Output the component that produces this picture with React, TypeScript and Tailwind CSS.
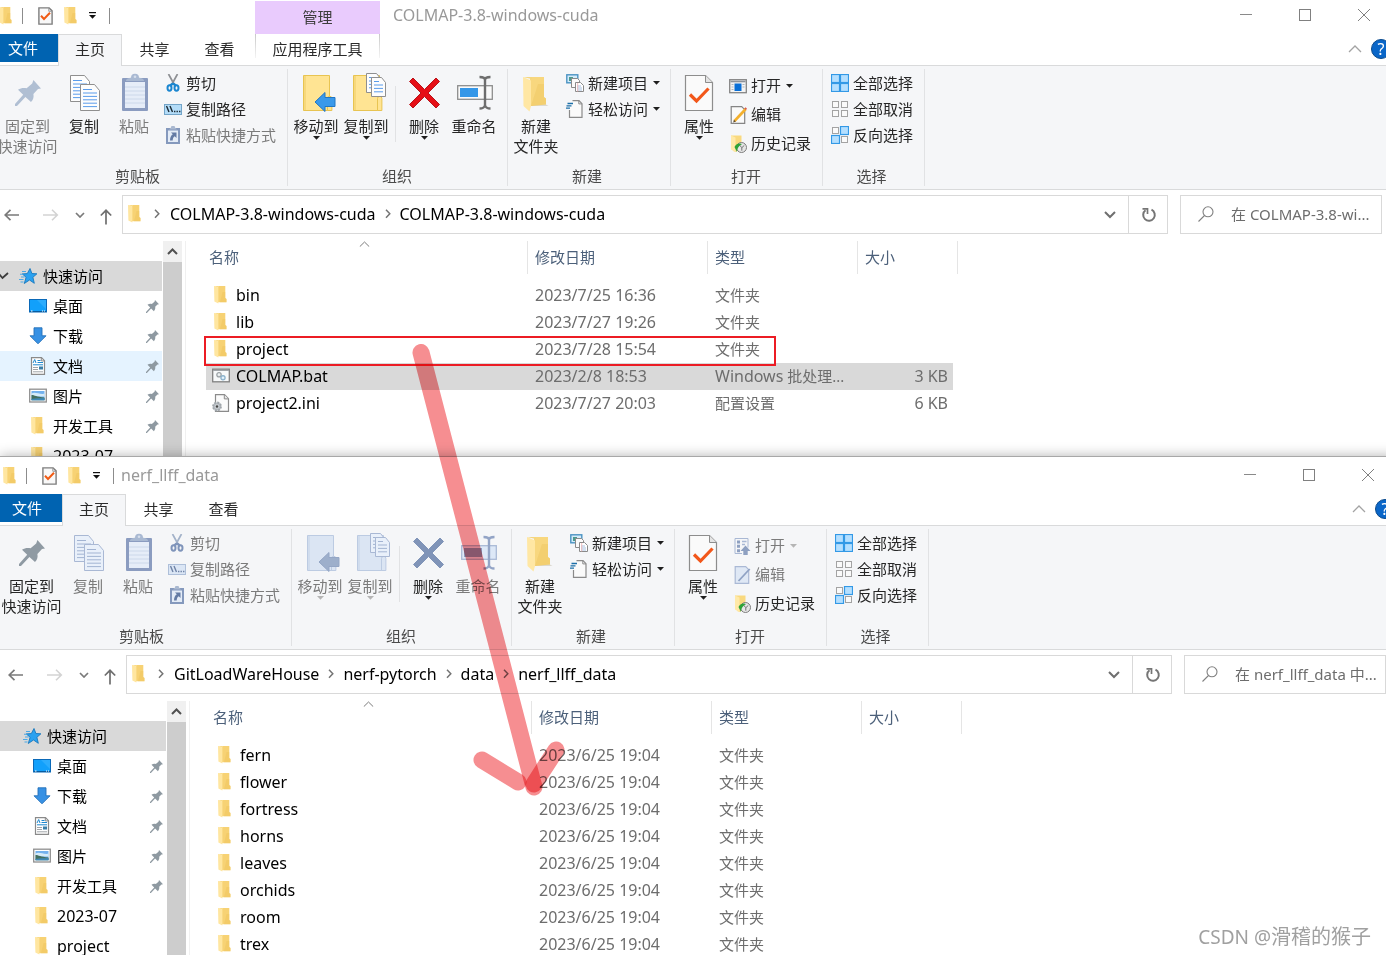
import React from "react";

type Tone = "active" | "muted";

const INK = "text-[#262626]";
const FADED = "text-[#7b7b7b]";

/* ---------- icons ---------- */

function FolderIcon({ className = "h-[18px] w-[13px]" }: { className?: string }) {
  return (
    <svg viewBox="0 0 13 18" className={`${className} shrink-0`} aria-hidden="true">
      <path d="M4 0h7.3v12l1.2 1v3.2H4z" fill="#f7d274" />
      <path d="M8.5 6h2.8v6l1.2 1v3.2H6z" fill="#eec45c" opacity=".45" />
      <path d="M0 0l4.400 1.600v16L.4 15.400z" fill="#ffe6a0" />
      <path d="M0 0h5v1.700z" fill="#fbdc88" />
    </svg>
  );
}

function CheckPageIcon() {
  return (
    <svg viewBox="0 0 15 18" className="h-[18px] w-[15px] shrink-0" aria-hidden="true">
      <path d="M.9.9h10.200l3 3v13.200H.9z" fill="#f8f8f8" stroke="#7d7d7d" strokeWidth="1.400" />
      <path d="M10.800.9v3.400h3.400" fill="none" stroke="#9a9a9a" />
      <path d="M3 8.800l3 3.200 6-6.200" fill="none" stroke="#f05a14" strokeWidth="2" />
    </svg>
  );
}

function PushPin({ fill, className }: { fill: string; className: string }) {
  return (
    <svg viewBox="0 0 26 26" className={`${className} shrink-0`} aria-hidden="true">
      <path
        d="M18 0l8 8.400-3 .5-4.600 4.800c.6 3.600 0 5.800-2.600 8.600l-5.600-5.200L1.800 26 0 26l0-1.800 8.400-9L3 9.600c2.800-1.900 5.400-2.300 8.600-1.600L17 3.400z"
        fill={fill}
      />
    </svg>
  );
}

function Big({ children }: { children: React.ReactNode }) {
  return (
    <svg viewBox="0 0 36 38" className="h-[38px] w-9 shrink-0 overflow-visible" aria-hidden="true">
      {children}
    </svg>
  );
}

function BigPin({ tone }: { tone: Tone }) {
  return (
    <Big>
      <g transform="translate(5 6)">
        <path
          d="M18.400 0l7.600 8.400-3 .5-4.600 5c.6 3.400 0 5.400-2.400 8l-5.600-5L2 26 0 26l0-2 8.200-9.200L3 9.800c2.800-1.900 5.400-2.300 8.600-1.600L17.200 3.400z"
          fill={tone === "active" ? "#8f9aa3" : "#b0bfd3"}
        />
      </g>
    </Big>
  );
}

function TextPage({ x, y, w, h, tone }: { x: number; y: number; w: number; h: number; tone: Tone }) {
  const edge = tone === "active" ? "#8f8f8f" : "#a9b8d4";
  const line = tone === "active" ? "#5a9ceb" : "#a3b4d2";
  const paper = tone === "active" ? "#fdfdfd" : "#e9f0fa";
  const fold = Math.round(w * 0.3);
  const rows = Math.floor((h - fold - 4) / 3.4);
  return (
    <g transform={`translate(${x} ${y})`}>
      <path d={`M.5.5h${w - fold}l${fold - 1} ${fold}v${h - fold - 1}H.5z`} fill={paper} stroke={edge} />
      <path d={`M${w - fold}.5v${fold}h${fold - 1}`} fill="#dfe5ec" stroke={edge} strokeWidth=".9" />
      <path d={`M3 ${fold - 0.5}h${w - fold - 5}`} stroke={line} />
      {Array.from({ length: rows }, (_, i) => (
        <path key={i} d={`M3 ${fold + 3 + i * 3.4}h${w - 6}`} stroke={line} />
      ))}
    </g>
  );
}

function BigCopy({ tone }: { tone: Tone }) {
  return (
    <Big>
      <TextPage x={4} y={1} w={20} h={27} tone={tone} />
      <TextPage x={14} y={10} w={20} h={27} tone={tone} />
    </Big>
  );
}

function BigPaste() {
  return (
    <Big>
      <rect x="6" y="4" width="26" height="33" rx="1" fill="#8b9cc0" />
      <rect x="9" y="8" width="20" height="26" fill="#e6edf8" />
      <path d="M9 13h20M9 17h20M9 21h20M9 25h20M9 29h20" stroke="#ccd8ea" />
      <path d="M10 7c0-2.500 3-3 5-3.200a4 4 0 0 1 8 0c2 .2 5 .7 5 3.200z" fill="#a9b9d2" />
      <circle cx="19" cy="2.800" r="1.300" fill="#d5deeb" />
    </Big>
  );
}

function BigFolderBase({ tone }: { tone: Tone }) {
  const fill = tone === "active" ? "#ffe493" : "#dbe5f3";
  const edge = tone === "active" ? "#e8c452" : "#bccbe2";
  return (
    <>
      <path d="M5.500 1.500h26v35h-26z" fill={fill} stroke={edge} />
      <path d="M5.500 1.500h2.500v35h-2.500z" fill={edge} opacity=".35" />
      <path d="M29.500 36.500v-12a2.200 2.200 0 0 1 4.400 0v12z" fill={fill} stroke={edge} />
    </>
  );
}

function BigMove({ tone }: { tone: Tone }) {
  return (
    <Big>
      <BigFolderBase tone={tone} />
      <path
        d="M17 28l10-9.500v5h10v9H27v5z"
        fill={tone === "active" ? "#3a99ea" : "#9dafcb"}
        stroke={tone === "active" ? "#2176c4" : "#94a6c5"}
      />
    </Big>
  );
}

function BigCopyTo({ tone }: { tone: Tone }) {
  return (
    <Big>
      <BigFolderBase tone={tone} />
      <TextPage x={18} y={-1} w={15} h={20} tone={tone} />
      <TextPage x={23} y={3} w={15} h={20} tone={tone} />
    </Big>
  );
}

function BigDelete({ tone }: { tone: Tone }) {
  const fill = tone === "active" ? "#e60f16" : "#8094b8";
  const edge = tone === "active" ? "#b8141a" : "#8094b8";
  return (
    <Big>
      <path
        d="M3.500 7.500l3.500-3.500 11.500 11.500L30 4l3.500 3.500L22 19l11.500 11.500L30 34 18.500 22.500 7 34l-3.500-3.500L15 19z"
        fill={fill}
        stroke={edge}
      />
    </Big>
  );
}

function BigRename({ tone }: { tone: Tone }) {
  const on = tone === "active";
  return (
    <Big>
      <g transform="translate(1 0)">
        <rect x=".7" y="11.700" width="34.600" height="13.600" fill={on ? "#fafafa" : "#dde8f7"} stroke={on ? "#8d8d8d" : "#a9b9d6"} strokeWidth="1.300" />
        <rect x="3" y="14" width="18" height="9" fill={on ? "#3597e8" : "#8c9cc0"} />
        <path
          d="M22.500 3c3 0 5.500 1 5.500 3v25c0 2-2.500 3.500-5.500 3.500M33.500 3c-3 0-5.500 1-5.500 3v25c0 2 2.500 3.500 5.500 3.500"
          fill="none"
          stroke={on ? "#6e6e6e" : "#93a4c6"}
          strokeWidth="2.400"
        />
      </g>
    </Big>
  );
}

function BigNewFolder() {
  return (
    <Big>
      <g transform="translate(-1 0)">
        <path d="M13 3h14v20l2 1.500V32H13z" fill="#f8d77e" />
        <path d="M21 10h6v13l2 1.500V32H14z" fill="#ecc45c" opacity=".4" />
        <path d="M6 3h9l-.3 2z" fill="#f5d67e" />
        <path d="M6 3l8 3.500V32l-1.500 5.500L6.500 32z" fill="#ffe7a4" />
        <path d="M29 30.500l2.500 1.500H15z" fill="#dcd9d0" />
      </g>
    </Big>
  );
}

function BigProperties() {
  return (
    <Big>
      <path d="M4.500 1.500h20l7 7v28h-27z" fill="#fafafa" stroke="#8d8d8d" strokeWidth="1.200" />
      <path d="M24.500 1.500v7h7" fill="#e4e4e4" stroke="#8d8d8d" />
      <path d="M9 20.500l6.500 6.500L27.500 14.500" fill="none" stroke="#f2571a" strokeWidth="3.200" />
    </Big>
  );
}

function Small({ children }: { children: React.ReactNode }) {
  return (
    <svg viewBox="0 0 18 18" className="h-[18px] w-[18px] shrink-0" aria-hidden="true">
      {children}
    </svg>
  );
}

function CutIcon({ tone }: { tone: Tone }) {
  const blade = tone === "active" ? "#8e9094" : "#a3b2c9";
  const ring = tone === "active" ? "#1b86d0" : "#7f94ba";
  return (
    <Small>
      <path d="M4.500 0L10.500 11M13.500 0L7.500 11" stroke={blade} strokeWidth="1.700" />
      <path d="M9 9.500l-3 2M9 9.500l3 2" stroke={ring} strokeWidth="2.200" />
      <ellipse cx="5.500" cy="14" rx="2" ry="2.700" fill="none" stroke={ring} strokeWidth="2" />
      <ellipse cx="12.500" cy="14" rx="2" ry="2.700" fill="none" stroke={ring} strokeWidth="2" />
    </Small>
  );
}

function PathIcon({ tone }: { tone: Tone }) {
  const on = tone === "active";
  return (
    <Small>
      <rect x=".5" y="4.500" width="17" height="10" fill={on ? "#b3dcf8" : "#dbe6f5"} stroke={on ? "#73a4c8" : "#aebfd9"} />
      <path d="M2.500 6l2.500 6M6 6l2.500 6" stroke={on ? "#1c2a35" : "#6f83a6"} strokeWidth="1.400" />
      <path d="M10 11.500h1.400M12.500 11.500h1.400M15 11.500h1.400" stroke={on ? "#1c2a35" : "#6f83a6"} strokeWidth="1.400" />
    </Small>
  );
}

function PasteShortcutIcon() {
  return (
    <Small>
      <rect x="2" y="2" width="14" height="16" fill="#8599bd" />
      <rect x="4" y="4.500" width="10" height="11.500" fill="#e4ecf7" />
      <path d="M5 3.500h8L11 1.500a2 2 0 0 0-4 0z" fill="#a9b8d0" />
      <path d="M7 6.500h5.500V12l-1.800-1.800C9.300 11 8.700 12.500 8.700 14.500H6c0-3 1-5 2.800-6.200z" fill="#647ba4" />
    </Small>
  );
}

function NewItemIcon() {
  return (
    <Small>
      <rect x=".8" y=".8" width="11" height="8" fill="#d4ebfa" stroke="#4b93c3" strokeWidth="1.400" />
      <rect x="3" y="3" width="4" height="4" fill="#4b9a8e" />
      <path d="M5.500 4.500h6l2 2v7h-8z" fill="#fafafa" stroke="#8a8a8a" />
      <path d="M9.500 8.500h5l3 3v6h-8z" fill="#fff" stroke="#8a8a8a" />
      <path d="M11 12h4M11 14h5M11 16h5" stroke="#9bb9dd" strokeWidth=".9" />
      <path d="M11.700 9v8.500" stroke="#efb0b0" strokeWidth=".8" />
    </Small>
  );
}

function EasyAccessIcon() {
  return (
    <Small>
      <path d="M3.500 .700h9.500l3 3v13.600H3.500z" fill="#fafafa" />
      <path d="M6.500.7H13l3 3v13.600H3.500V10" fill="none" stroke="#8a8a8a" strokeWidth="1.200" />
      <path d="M12.800.7v3.200H16" fill="none" stroke="#8a8a8a" />
      <path d="M1.500 3.500h5.500M.5 5.800h5M0 8.200h4" stroke="#1d6fa8" strokeWidth="1.300" />
    </Small>
  );
}

function OpenIcon({ tone }: { tone: Tone }) {
  if (tone === "active") {
    return (
      <Small>
        <rect x=".7" y="2.700" width="16.600" height="13" fill="#f4f4f4" stroke="#858585" strokeWidth="1.300" />
        <path d="M1.500 4.500h15" stroke="#8d9299" strokeWidth="1.600" />
        <rect x="5.500" y="6.500" width="7" height="7.500" fill="#0a6fd6" />
        <path d="M2.500 7.500h2M2.500 10h2M2.500 12.500h2M13.500 7.500h2M13.500 10h2" stroke="#b0b5bb" />
      </Small>
    );
  }
  return (
    <Small>
      <path d="M2 1.500h13v9M2 1.500v15h7" fill="none" stroke="#a9b8d4" />
      <path d="M4 3.500h3v3H4zM4 7.800h3v3H4zM4 12.300h3v3H4z" fill="#8ea0c1" />
      <path d="M9 4.500h4.500M9 7.500h3" stroke="#a9b8d4" strokeWidth="1.300" />
      <path d="M12.500 8.500l5 5.500h-2.800v4h-4.400v-4H7.500z" fill="#8ea0c1" />
    </Small>
  );
}

function EditIcon({ tone }: { tone: Tone }) {
  const on = tone === "active";
  return (
    <Small>
      <path d="M2.200.7h10.500l3 3v13.600H2.200z" fill={on ? "#fafafa" : "#dfe8f5"} stroke={on ? "#858585" : "#aab9d5"} strokeWidth="1.200" />
      <path d="M5.500 15L16.700 3" stroke={on ? "#f3b02e" : "#8fa2c4"} strokeWidth={on ? 2.600 : 1.800} />
      {on && <path d="M4.200 16.500l.7-2.800 2 1.800z" fill="#5d4a2a" />}
      {on && <path d="M15.300 2.600l1.300-1.300 1.400 1.400-1.200 1.400z" fill="#d8594d" />}
    </Small>
  );
}

function HistoryIcon() {
  return (
    <Small>
      <path d="M2 .5h10.500v12l-5.500 4.500-3-1z" fill="#f9d97f" />
      <path d="M2 .5l4.500 2v14.500L2 14.500z" fill="#ffe9a8" />
      <circle cx="12.500" cy="12.500" r="5" fill="#e6e6e6" stroke="#7c7c7c" />
      <path d="M10.500 10l2.300 2.700 2.500-2.300M12.800 12.700v3" stroke="#666" fill="none" strokeWidth=".9" />
      <path d="M5.500 12l2.500 5c0-3 1.600-6.500 5.200-8-3.500-1.500-6.800.3-7.700 3z" fill="#2ea338" />
    </Small>
  );
}

function SelectGrid({ on }: { on: [boolean, boolean, boolean, boolean] }) {
  const spots: [number, number][] = [
    [0.5, 0.5],
    [9.5, 0.5],
    [0.5, 9.5],
    [9.5, 9.5],
  ];
  return (
    <Small>
      {spots.map(([x, y], i) =>
        on[i] ? (
          <rect key={i} x={x} y={y} width="8" height="8" fill="#b4dfff" stroke="#3399e6" strokeWidth="1.200" />
        ) : (
          <rect key={i} x={x + 1} y={y + 1} width="6" height="6" fill="#fafafa" stroke="#a3a3a3" />
        ),
      )}
    </Small>
  );
}

function StarIcon() {
  return (
    <svg viewBox="0 0 18 18" className="h-[18px] w-[18px] shrink-0" aria-hidden="true">
      <path d="M11 1.500l1.900 5 5 .3-4 3.500 1.400 6L10.500 13l-5.200 3.500 1.800-6.200L3.300 6.900l5-.3z" fill="#2aa1f0" stroke="#1878bd" strokeWidth=".9" />
      <path d="M3 4.500h4M1 7.200h3.500M2 10h3.500M0 12.500h4.500M1.500 15h3" stroke="#4ba9e6" strokeWidth="1.100" />
    </svg>
  );
}

function DesktopIcon() {
  return (
    <Small>
      <rect x=".5" y="2.500" width="17" height="12.500" fill="#12a0fb" stroke="#0a69b8" />
      <path d="M8 3h9v9z" fill="#4dbbff" opacity=".45" />
      <path d="M1 14.500h16" stroke="#0a5c9e" />
      <path d="M2 14h1.500M13 14h1M15 14h1" stroke="#fff" />
    </Small>
  );
}

function DownloadIcon() {
  return (
    <Small>
      <path d="M5 .8h8v8h4L9 16.800 1 8.800h4z" fill="#3791e4" stroke="#2571b9" strokeWidth=".9" />
    </Small>
  );
}

function DocumentIcon() {
  return (
    <Small>
      <path d="M2.500.7h10l3 3v13.600h-13z" fill="#fff" stroke="#8a8a8a" strokeWidth="1.200" />
      <path d="M12.300.7v3.200h3.200" fill="none" stroke="#8a8a8a" />
      <path d="M4 6l1.700-3.500L7 6M8.500 3.500h3M8.500 5.500H14M4 7.800h10" stroke="#1f88cf" fill="none" />
      <path d="M4 10.500h5M4 12.500h5M4 14.800h10" stroke="#a0a4a8" />
      <rect x="10" y="9.500" width="4" height="3" fill="#3b7ea8" />
    </Small>
  );
}

function PictureIcon() {
  return (
    <Small>
      <rect x=".7" y="2.200" width="16.600" height="12.800" fill="#fff" stroke="#909090" strokeWidth="1.300" />
      <rect x="2.500" y="4" width="13" height="9.200" fill="#73b1ee" />
      <path d="M2.500 6.500c4-2 7 1 13 .3v2.700h-13z" fill="#d5ebf9" />
      <path d="M2.500 8c3 0 5 2 13 2.400v2.800h-13z" fill="#44705f" />
      <path d="M2.500 12c4-1 9-.6 13-1v2.200h-13z" fill="#3f88b6" />
    </Small>
  );
}

function BatIcon() {
  return (
    <Small>
      <rect x=".7" y="2.200" width="16.600" height="12.600" fill="#f7f9fa" stroke="#818181" strokeWidth="1.300" />
      <path d="M1 3.500h16" stroke="#a0a4a8" />
      <circle cx="7" cy="7.700" r="2.200" fill="#dfe5e8" stroke="#9aa0a4" strokeWidth="1.200" />
      <circle cx="7" cy="7.700" r=".7" fill="#fff" />
      <circle cx="11" cy="10.800" r="2.100" fill="#cce5f5" stroke="#8ab0ca" strokeWidth="1.200" />
      <circle cx="11" cy="10.800" r=".7" fill="#fff" />
    </Small>
  );
}

function IniIcon() {
  return (
    <Small>
      <path d="M3.500.7h9l4 4v12.600h-13z" fill="#fbfbfb" stroke="#8b8b8b" strokeWidth="1.200" />
      <path d="M12.300.7v4.200h4.200" fill="#e7e7e7" stroke="#8b8b8b" />
      <circle cx="5" cy="12.500" r="4" fill="#b6bbc0" stroke="#a0a6ab" strokeWidth="1.800" strokeDasharray="2 1.100" />
      <circle cx="5" cy="12.500" r="2.300" fill="#c9ced2" />
      <circle cx="5" cy="12.500" r="1.200" fill="#444" />
    </Small>
  );
}

function Caret({ tone = "active", className = "" }: { tone?: Tone; className?: string }) {
  return (
    <svg viewBox="0 0 7 4" className={`h-1 w-[7px] shrink-0 ${className}`} aria-hidden="true">
      <path d="M0 0h7L3.500 3.800z" fill={tone === "active" ? "#1e1e1e" : "#b5b5b5"} />
    </svg>
  );
}

function Chevron({ d, box, className, stroke = "#6b6b6b", width = 1.6 }: { d: string; box: string; className: string; stroke?: string; width?: number }) {
  return (
    <svg viewBox={box} className={`${className} shrink-0`} aria-hidden="true">
      <path d={d} fill="none" stroke={stroke} strokeWidth={width} />
    </svg>
  );
}

/* ---------- ribbon ---------- */

function BigButton({
  icon,
  lines,
  tone = "active",
  caret = false,
  width = "w-[50px]",
}: {
  icon: React.ReactNode;
  lines: string[];
  tone?: Tone;
  caret?: boolean;
  width?: string;
}) {
  return (
    <button type="button" className={`flex ${width} shrink-0 flex-col items-center pt-1 ${tone === "active" ? INK : FADED}`}>
      {icon}
      <span className="mt-1 flex flex-col items-center leading-5 whitespace-nowrap">
        {lines.map((line) => (
          <span key={line}>{line}</span>
        ))}
      </span>
      {caret && <Caret tone={tone} />}
    </button>
  );
}

function SmallButton({
  icon,
  label,
  tone = "active",
  caret = false,
  height = "h-[26px]",
}: {
  icon: React.ReactNode;
  label: string;
  tone?: Tone;
  caret?: boolean;
  height?: string;
}) {
  return (
    <button type="button" className={`flex ${height} items-center gap-1 whitespace-nowrap ${tone === "active" ? INK : FADED}`}>
      {icon}
      <span>{label}</span>
      {caret && <Caret tone={tone} className="ml-px" />}
    </button>
  );
}

function Group({ label, className, children }: { label: string; className: string; children: React.ReactNode }) {
  return (
    <>
      <div className={`flex shrink-0 flex-col pt-1 pb-[3px] ${className}`}>
        <div className="flex h-24 items-start">{children}</div>
        <div className="pr-1 text-center leading-5 text-[#4a4a4a]">{label}</div>
      </div>
      <div className="my-[3px] w-px shrink-0 bg-[#e1e2e4]" />
    </>
  );
}

/* The clipboard and organise commands depend on whether a file is selected. */
function Ribbon({ selection }: { selection: boolean }) {
  const file: Tone = selection ? "active" : "muted";
  const pin: Tone = selection ? "muted" : "active";
  return (
    <div className="flex overflow-hidden border-b border-[#d9dadb] bg-[#f5f6f8] text-[15px]">
      <Group label="剪贴板" className="w-[291px] pr-1">
        <BigButton icon={<BigPin tone={pin} />} lines={["固定到", "快速访问"]} tone={pin} width="w-[63px]" />
        <BigButton icon={<BigCopy tone={file} />} lines={["复制"]} tone={file} />
        <BigButton icon={<BigPaste />} lines={["粘贴"]} tone="muted" />
        <div className="ml-[5px] flex flex-col">
          <SmallButton icon={<CutIcon tone={file} />} label="剪切" tone={file} />
          <SmallButton icon={<PathIcon tone={file} />} label="复制路径" tone={file} />
          <SmallButton icon={<PasteShortcutIcon />} label="粘贴快捷方式" tone="muted" />
        </div>
      </Group>
      <Group label="组织" className="w-[219px] pl-[3px]">
        <BigButton icon={<BigMove tone={file} />} lines={["移动到"]} tone={file} caret />
        <BigButton icon={<BigCopyTo tone={file} />} lines={["复制到"]} tone={file} caret />
        <div className="mt-4 mr-[3px] ml-1 h-14 w-px bg-[#e1e2e4]" />
        <BigButton icon={<BigDelete tone={file} />} lines={["删除"]} caret />
        <BigButton icon={<BigRename tone={file} />} lines={["重命名"]} tone={file} />
      </Group>
      <Group label="新建" className="w-[162px]">
        <BigButton icon={<BigNewFolder />} lines={["新建", "文件夹"]} width="w-14" />
        <div className="ml-0.5 flex flex-col">
          <SmallButton icon={<NewItemIcon />} label="新建项目" caret />
          <SmallButton icon={<EasyAccessIcon />} label="轻松访问" caret />
        </div>
      </Group>
      <Group label="打开" className="w-[151px] pl-[3px]">
        <BigButton icon={<BigProperties />} lines={["属性"]} caret />
        <div className="ml-[5px] flex flex-col pt-px">
          <SmallButton icon={<OpenIcon tone={file} />} label="打开" tone={file} caret height="h-[29px]" />
          <SmallButton icon={<EditIcon tone={file} />} label="编辑" tone={file} height="h-[29px]" />
          <SmallButton icon={<HistoryIcon />} label="历史记录" height="h-[29px]" />
        </div>
      </Group>
      <Group label="选择" className="w-[101px]">
        <div className="flex flex-col pl-2">
          <SmallButton icon={<SelectGrid on={[true, true, true, true]} />} label="全部选择" />
          <SmallButton icon={<SelectGrid on={[false, false, false, false]} />} label="全部取消" />
          <SmallButton icon={<SelectGrid on={[false, true, true, false]} />} label="反向选择" />
        </div>
      </Group>
    </div>
  );
}

/* ---------- window frame ---------- */

function TitleBar({ title, context }: { title: string; context?: string }) {
  return (
    <header className="flex h-[37px] items-stretch">
      <div className="flex items-center pl-[3px]">
        <FolderIcon />
        <span className="ml-2.5 h-4 w-px bg-[#8c8c8c]" />
        <button type="button" aria-label="属性" className="ml-[15px]">
          <CheckPageIcon />
        </button>
        <button type="button" aria-label="新建文件夹" className="ml-[11px]">
          <FolderIcon />
        </button>
        <button type="button" aria-label="自定义快速访问工具栏" className="ml-3">
          <svg viewBox="0 0 7 7" className="h-[7px] w-[7px]" aria-hidden="true">
            <path d="M0 .6h7" stroke="#111" strokeWidth="1.200" />
            <path d="M0 3h7L3.500 6.800z" fill="#111" />
          </svg>
        </button>
        <span className="ml-[13px] h-4 w-px bg-[#8c8c8c]" />
      </div>
      {context && (
        <div className="mt-1 ml-[145px] flex w-[125px] items-center justify-center bg-[#e9cbfd] text-[15px] text-[#3d3d3d]">
          {context}
        </div>
      )}
      <h1 className={`flex flex-1 items-center pb-0.5 text-[16px] text-[#999999] ${context ? "ml-[13px]" : "ml-[7px]"}`}>{title}</h1>
      <div className="flex items-center gap-[47px] pr-6 pb-0.5">
        <button type="button" aria-label="最小化">
          <svg viewBox="0 0 12 12" className="h-3 w-3" aria-hidden="true">
            <path d="M0 5.500h12" stroke="#8a8a8a" />
          </svg>
        </button>
        <button type="button" aria-label="最大化">
          <svg viewBox="0 0 12 12" className="h-3 w-3" aria-hidden="true">
            <rect x=".5" y=".5" width="11" height="11" fill="none" stroke="#808080" />
          </svg>
        </button>
        <button type="button" aria-label="关闭">
          <svg viewBox="0 0 12 12" className="h-3 w-3" aria-hidden="true">
            <path d="M0 0l12 12M12 0L0 12" stroke="#808080" />
          </svg>
        </button>
      </div>
    </header>
  );
}

function Tabs({ context }: { context?: string }) {
  return (
    <nav className="flex h-8 items-stretch border-b border-[#d9dadb] text-[15px] text-[#2b2b2b]">
      <button type="button" className="mb-[3px] w-[62px] bg-[#0063b1] pr-2 text-white">
        文件
      </button>
      <button type="button" className="-mb-px w-16 border border-b-0 border-[#d9dadb] bg-[#f5f6f8] pb-0.5">
        主页
      </button>
      <button type="button" className="w-[65px]">
        共享
      </button>
      <button type="button" className="w-[65px]">
        查看
      </button>
      {context && (
        <div className="relative ml-[3px] flex w-[125px]">
          <span className="h-6 w-px bg-gradient-to-b from-[#c8c8c8] to-[#f4f4f4]" />
          <button type="button" className="flex-1">
            {context}
          </button>
          <span className="h-6 w-px bg-gradient-to-b from-[#c8c8c8] to-[#f4f4f4]" />
        </div>
      )}
      <div className="flex flex-1 items-center justify-end gap-[9px] pr-[3px] pb-px">
        <button type="button" aria-label="最小化功能区">
          <Chevron d="M1 7l6-6 6 6" box="0 0 14 8" className="h-2 w-3.5" stroke="#a3a3a3" width={1.3} />
        </button>
        <button
          type="button"
          aria-label="帮助"
          className="flex h-5 w-5 items-center justify-center rounded-full border border-[#0b4a8c] bg-[#0a66c8] text-[16px] leading-none text-white"
        >
          ?
        </button>
      </div>
    </nav>
  );
}

function AddressBar({ crumbs, search }: { crumbs: string[]; search: string }) {
  return (
    <div className="flex items-stretch pt-[5px] pr-3 pb-[7px]">
      <div className="flex w-[126px] shrink-0 items-center pl-2">
        <button type="button" aria-label="后退">
          <Chevron d="M15 6H1M6.500.8L1.200 6l5.300 5.200" box="0 0 16 12" className="h-3 w-4" stroke="#7a7a7a" width={1.7} />
        </button>
        <button type="button" aria-label="前进" className="ml-[23px]">
          <Chevron d="M0 6h14M9 .8L14.300 6 9 11.200" box="0 0 16 12" className="h-3 w-4" stroke="#d3d3d3" width={1.6} />
        </button>
        <button type="button" aria-label="最近浏览的位置" className="ml-4">
          <Chevron d="M1 1l4 4 4-4" box="0 0 10 6" className="h-1.5 w-2.5" stroke="#7a7a7a" width={1.7} />
        </button>
        <button type="button" aria-label="上移" className="mt-1 ml-[15px]">
          <Chevron d="M6 15.500V1.500M.8 6.500L6 1.300l5.200 5.200" box="0 0 12 16" className="h-4 w-3" stroke="#6f6f6f" width={1.7} />
        </button>
      </div>
      <div className="flex h-[39px] min-w-0 flex-1 items-center border border-[#d9d9d9] pl-[5px] text-[16px] text-black">
        <span className="pb-0.5">
          <FolderIcon />
        </span>
        {crumbs.map((crumb, i) => (
          <React.Fragment key={crumb + i}>
            <Chevron d="M1 .8l3.800 4L1 8.800" box="0 0 6 10" className={i === 0 ? "mr-2.5 mb-0.5 ml-[13px] h-2.5 w-1.5" : "mx-[9px] mb-0.5 h-2.5 w-1.5"} stroke="#747474" width={1.5} />
            <a href="#" className="pb-0.5 whitespace-nowrap">
              {crumb}
            </a>
          </React.Fragment>
        ))}
        <button type="button" aria-label="以前的位置" className="mr-3 ml-auto">
          <Chevron d="M1 1l5 5 5-5" box="0 0 12 8" className="h-2 w-3" stroke="#6f6f6f" width={2} />
        </button>
        <button type="button" aria-label="刷新" className="flex w-[39px] items-center justify-center self-stretch border-l border-[#d9d9d9] pl-px">
          <svg viewBox="0 0 16 16" className="h-4 w-4" aria-hidden="true">
            <path d="M10.500 2.700a5.800 5.800 0 1 1-6 .6" fill="none" stroke="#757575" strokeWidth="2" />
            <path d="M1.500 1.900h5v5" fill="none" stroke="#757575" strokeWidth="1.700" />
          </svg>
        </button>
      </div>
      <label className="ml-3 flex w-[202px] shrink-0 items-center border border-[#d9d9d9] pr-1 pb-px pl-[17px]">
        <svg viewBox="0 0 16 16" className="h-4 w-4 shrink-0" aria-hidden="true">
          <circle cx="10" cy="5.800" r="5" fill="none" stroke="#808080" strokeWidth="1.100" />
          <path d="M6.500 9.500L.5 15.500" stroke="#808080" strokeWidth="1.100" />
        </svg>
        <input
          type="text"
          aria-label="搜索"
          placeholder={search}
          className="ml-[17px] w-full min-w-0 bg-transparent text-[15px] outline-none placeholder:text-[#6d6d6d]"
        />
      </label>
    </div>
  );
}

type Place = { name: string; icon: React.ReactNode; pinned?: boolean; lit?: boolean; latin?: boolean };

function Sidebar({ places, expander }: { places: Place[]; expander: boolean }) {
  return (
    <aside className="flex shrink-0">
      <ul className="w-[166px] pt-5 text-[15px] text-black">
        <li className="flex h-[30px] items-center bg-[#d9d9d9]">
          <span className="flex w-[23px] pl-[3px]">
            {expander && <Chevron d="M0 2l3.500 4L9 1" box="0 0 10 8" className="h-2 w-2.5" stroke="#3c3c3c" width={1.8} />}
          </span>
          <StarIcon />
          <a href="#" className="ml-1.5">
            快速访问
          </a>
        </li>
        {places.map((p) => (
          <li key={p.name} className={`flex h-[30px] items-center pr-[3px] pl-[33px] ${p.lit ? "bg-[#e5f3ff]" : ""}`}>
            <span className="flex w-[18px] justify-center">{p.icon}</span>
            <a href="#" className={`ml-1.5 ${p.latin ? "text-[16px]" : ""}`}>
              {p.name}
            </a>
            {p.pinned && (
              <span className="ml-auto">
                <PushPin fill="#8e99a1" className="h-[13px] w-[13px]" />
              </span>
            )}
          </li>
        ))}
      </ul>
      <div className="ml-px flex w-[19px] flex-col bg-[#cdcdcd]">
        <button type="button" aria-label="向上滚动" className="flex h-[21px] items-center justify-center bg-[#f0f0f0]">
          <Chevron d="M1 6l4.500-4.500L10 6" box="0 0 11 7" className="h-[7px] w-[11px]" stroke="#505050" width={2} />
        </button>
      </div>
      <div className="ml-[3px] w-px bg-[#f0f0f0]" />
    </aside>
  );
}

type Entry = { name: string; date: string; type: React.ReactNode; size?: string; icon?: React.ReactNode; selected?: boolean; boxed?: boolean };

function FileTable({ entries }: { entries: Entry[] }) {
  const head = "mb-2 flex h-[33px] items-center border-r border-[#e5e5e5]";
  return (
    <div className="min-w-0 flex-1 pl-5">
      <table className="w-[752px] table-fixed border-collapse text-left text-[15px]">
        <colgroup>
          <col className="w-[322px]" />
          <col className="w-[180px]" />
          <col className="w-[150px]" />
          <col className="w-[95px]" />
          <col className="w-[5px]" />
        </colgroup>
        <thead className="text-[#4c607a]">
          <tr>
            <th className="p-0 font-normal">
              <div className={`${head} relative pl-[3px]`}>
                名称
                <span className="absolute inset-x-0 top-0 flex justify-center pr-1">
                  <Chevron d="M.8 5.600L5.500 1l4.700 4.600" box="0 0 11 6" className="h-1.5 w-[11px]" stroke="#7b7b7b" width={1} />
                </span>
              </div>
            </th>
            <th className="p-0 font-normal">
              <div className={`${head} pl-[7px]`}>修改日期</div>
            </th>
            <th className="p-0 font-normal">
              <div className={`${head} pl-[7px]`}>类型</div>
            </th>
            <th colSpan={2} className="p-0 font-normal">
              <div className={`${head} pl-[7px]`}>大小</div>
            </th>
          </tr>
        </thead>
        <tbody className="text-[#6d6d6d]">
          {entries.map((e) => {
            const bg = e.selected ? "bg-[#d9d9d9]" : "";
            return (
              <tr key={e.name} className="h-[27px]">
                <td className={`relative p-0 ${bg}`}>
                  <div className="flex items-center pl-1.5 text-[16px] leading-[27px] text-black">
                    <span className="mr-1.5 flex w-[18px] justify-center pb-0.5">{e.icon ?? <FolderIcon className="mr-0.5 h-[18px] w-[13px]" />}</span>
                    {e.name}
                  </div>
                  {e.boxed && <span className="pointer-events-none absolute top-0 -left-0.5 z-10 h-[30px] w-[572px] border-2 border-[#ec1c24]" />}
                </td>
                <td className={`p-0 pl-[7px] text-[16px] leading-[27px] ${bg}`}>{e.date}</td>
                <td className={`p-0 pl-[7px] leading-[27px] whitespace-nowrap ${bg}`}>{e.type}</td>
                <td className={`p-0 pr-[5px] text-right text-[16px] leading-[27px] ${bg}`}>{e.size}</td>
                <td className="p-0" />
              </tr>
            );
          })}
        </tbody>
      </table>
    </div>
  );
}

/* ---------- page ---------- */

const commonPlaces: Place[] = [
  { name: "桌面", icon: <DesktopIcon />, pinned: true },
  { name: "下载", icon: <DownloadIcon />, pinned: true },
  { name: "文档", icon: <DocumentIcon />, pinned: true },
  { name: "图片", icon: <PictureIcon />, pinned: true },
  { name: "开发工具", icon: <FolderIcon className="mr-0.5 h-[18px] w-[13px]" />, pinned: true },
  { name: "2023-07", icon: <FolderIcon className="mr-0.5 h-[18px] w-[13px]" />, latin: true },
];

const colmapPlaces = commonPlaces.map((p) => (p.name === "文档" ? { ...p, lit: true } : p));
const nerfPlaces: Place[] = [
  ...commonPlaces,
  { name: "project", icon: <FolderIcon className="mr-0.5 h-[18px] w-[13px]" />, latin: true },
];

const colmapEntries: Entry[] = [
  { name: "bin", date: "2023/7/25 16:36", type: "文件夹" },
  { name: "lib", date: "2023/7/27 19:26", type: "文件夹" },
  { name: "project", date: "2023/7/28 15:54", type: "文件夹", boxed: true },
  {
    name: "COLMAP.bat",
    date: "2023/2/8 18:53",
    type: (
      <>
        <span className="text-[16px]">Windows</span> 批处理...
      </>
    ),
    size: "3 KB",
    icon: <BatIcon />,
    selected: true,
  },
  { name: "project2.ini", date: "2023/7/27 20:03", type: "配置设置", size: "6 KB", icon: <IniIcon /> },
];

const nerfEntries: Entry[] = ["fern", "flower", "fortress", "horns", "leaves", "orchids", "room", "trex"].map((name) => ({
  name,
  date: "2023/6/25 19:04",
  type: "文件夹",
}));

export default function App() {
  return (
    <main className="relative flex h-screen flex-col overflow-hidden bg-white font-['Noto_Sans','Noto_Sans_CJK_SC',sans-serif]">
      <section className="-mt-[3px] -mr-2 -ml-1 flex shrink-0 flex-col">
        <TitleBar title="COLMAP-3.8-windows-cuda" context="管理" />
        <Tabs context="应用程序工具" />
        <Ribbon selection />
        <AddressBar crumbs={["COLMAP-3.8-windows-cuda", "COLMAP-3.8-windows-cuda"]} search="在 COLMAP-3.8-wi..." />
        <div className="flex">
          <Sidebar places={colmapPlaces} expander />
          <FileTable entries={colmapEntries} />
        </div>
      </section>

      <section className="relative z-10 -mt-[15px] -mr-3 flex flex-1 flex-col border-t border-[#a8a8a8] bg-white shadow-[0_0_12px_rgba(0,0,0,0.3)]">
        <TitleBar title="nerf_llff_data" />
        <Tabs />
        <Ribbon selection={false} />
        <AddressBar crumbs={["GitLoadWareHouse", "nerf-pytorch", "data", "nerf_llff_data"]} search="在 nerf_llff_data 中..." />
        <div className="flex flex-1">
          <Sidebar places={nerfPlaces} expander={false} />
          <FileTable entries={nerfEntries} />
        </div>
      </section>

      <svg viewBox="0 0 160 460" className="pointer-events-none absolute top-[340px] left-[400px] z-20 h-[460px] w-40 overflow-visible mix-blend-multiply" aria-hidden="true">
        <g stroke="#f68e91" strokeWidth="17" strokeLinecap="round">
          <path d="M21 12.500L134 447" className="mix-blend-multiply" />
          <path d="M82 420L118 442" className="mix-blend-multiply" />
          <path d="M156 410L134 444" className="mix-blend-multiply" />
        </g>
      </svg>

      <p className="absolute right-[15px] bottom-1.5 z-20 text-[20px] leading-6 text-[#a0a0a0]">
        <span className="text-[19px]">CSDN @</span>滑稽的猴子
      </p>
    </main>
  );
}
